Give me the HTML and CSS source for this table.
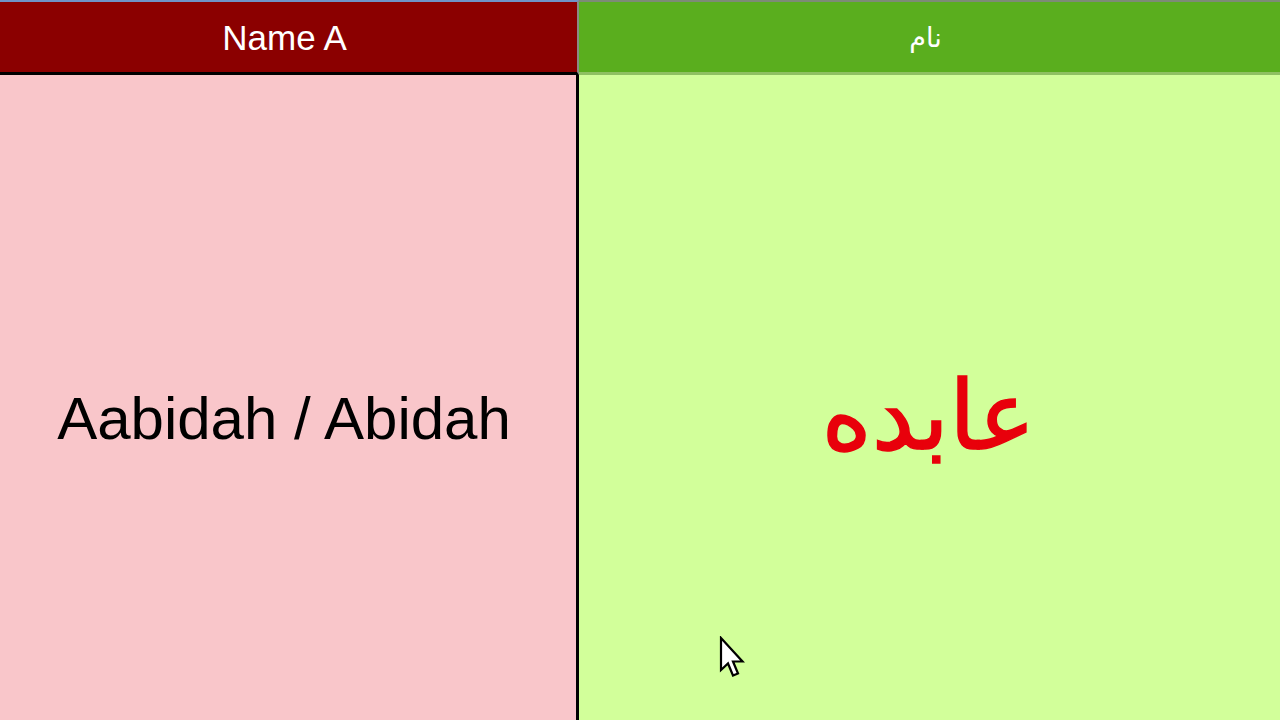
FILE: index.html
```html
<!DOCTYPE html>
<html lang="en">
<head>
<meta charset="utf-8">
<title>Names</title>
<link rel="stylesheet" href="styles.css">
</head>
<body>
<div class="page">
  <section class="col col-left">
    <header class="head head-left">Name A</header>
    <div class="body body-left"><span class="latin">Aabidah / Abidah</span></div>
  </section>
  <section class="col col-right">
    <header class="head head-right" dir="rtl">نام</header>
    <div class="body body-right"><span class="arabic" dir="rtl">عابده</span></div>
  </section>
  <svg class="cursor" width="26" height="43" viewBox="0 0 26 43" aria-hidden="true">
    <path d="M2 2 L2 34 L9 27.5 L14 39.5 L19 37.5 L14 25.5 L23.5 25.5 Z" fill="#fff" stroke="#000" stroke-width="2.2" stroke-linejoin="miter"/>
  </svg>
</div>
</body>
</html>
```
FILE: styles.css
```css
* { box-sizing: border-box; margin: 0; padding: 0; }
html, body { width: 1280px; height: 720px; overflow: hidden; }
body { font-family: "Liberation Sans", Arial, sans-serif; }
.page {
  position: relative;
  display: grid;
  grid-template-columns: 579px 1fr;
  height: 720px;
}
.col { display: flex; flex-direction: column; min-height: 0; }
.head {
  height: 75px;
  display: flex;
  align-items: center;
  justify-content: center;
  color: #fff;
  border-top: 2px solid #6f93c8;
}
.head-left {
  background: #8b0000;
  font-size: 35px;
  border-bottom: 3px solid #000;
  border-right: 2px solid #8a8a86;
  padding-right: 8px;
  padding-top: 2px;
}
.head-right {
  background: #5aae1e;
  border-top-color: #7d8b76;
  border-bottom: 3px solid #8fc062;
  font-family: "DejaVu Sans", sans-serif;
  font-size: 27px;
  padding-right: 8px;
}
.body { flex: 1; display: flex; align-items: center; justify-content: center; }
.body-left {
  background: #f9c6ca;
  border-right: 3px solid #000;
  padding-right: 8px;
  padding-top: 42px;
}
.body-right {
  background: #d2ff9a;
  padding-top: 36px;
  padding-right: 2px;
}
.latin { font-size: 60px; color: #000; }
.arabic {
  font-family: "DejaVu Sans", sans-serif;
  font-size: 96px;
  color: #e8000b;
  -webkit-text-stroke: 1.5px #e8000b;
}
.cursor { position: absolute; left: 719px; top: 636px; }
```
